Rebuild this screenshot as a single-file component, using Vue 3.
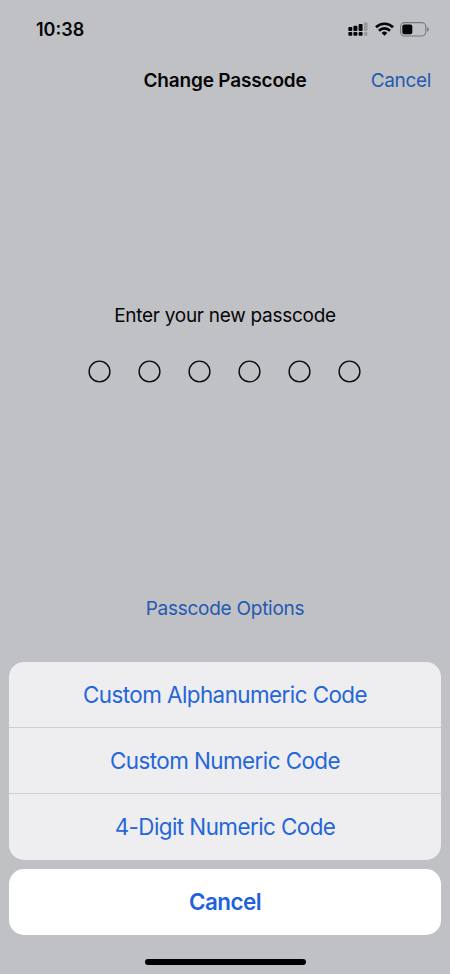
<script setup>
const options = [
  { label: 'Custom Alphanumeric Code', key: 'alpha' },
  { label: 'Custom Numeric Code', key: 'numeric' },
  { label: '4-Digit Numeric Code', key: 'digits' },
]
</script>

<template>
  <main class="screen">
    <div class="status">
      <span class="time">10:38</span>
      <div class="indicators">
        <svg width="20" height="14" viewBox="0 0 20 14">
          <g fill="#050506">
            <rect x="0.3" y="5" width="4" height="4" rx="1" />
            <rect x="5.4" y="3.8" width="4" height="5.2" rx="1" />
            <rect x="10.6" y="1.9" width="4" height="7.1" rx="1" />
            <rect x="0.3" y="10.1" width="4" height="3.7" rx="1" />
            <rect x="5.4" y="10.1" width="4" height="3.7" rx="1" />
            <rect x="10.6" y="10.1" width="4" height="3.7" rx="1" />
          </g>
          <g fill="#98999c">
            <rect x="16" y="0.3" width="3.5" height="8.7" rx="1" />
            <rect x="16" y="10.1" width="3.5" height="3.6" rx="1" />
          </g>
        </svg>
        <svg width="19" height="14" viewBox="0 0 19 14">
          <g fill="none" stroke="#050506" stroke-width="2.7">
            <path d="M1 5.2A12.2 12.2 0 0 1 18 5.2" />
            <path d="M4 8.7A7.9 7.9 0 0 1 15 8.7" />
          </g>
          <path d="M9.5 13.8 6.6 10.9A4.2 4.2 0 0 1 12.4 10.9Z" fill="#050506" />
        </svg>
        <svg width="29" height="15" viewBox="0 0 29 15">
          <rect x=".6" y=".6" width="25.2" height="13.4" rx="4" fill="none" stroke="#77787b" stroke-width="1.1" />
          <rect x="2.3" y="2.4" width="10" height="9.8" rx="2" fill="#050506" />
          <path d="M27 5v4.8q1.7-.8 1.7-2.4t-1.7-2.4Z" fill="#77787b" />
        </svg>
      </div>
    </div>

    <header class="nav">
      <h1 class="title">Change Passcode</h1>
      <button class="nav-cancel">Cancel</button>
    </header>

    <section class="entry">
      <p class="prompt">Enter your new passcode</p>
      <div class="dots">
        <svg v-for="n in 6" :key="n" class="dot" viewBox="0 0 23 23">
          <circle cx="11.5" cy="11.5" r="10.4" />
        </svg>
      </div>
      <button class="more">Passcode Options</button>
    </section>

    <section class="sheet">
      <div class="group">
        <button v-for="o in options" :key="o.key" class="option" :class="o.key">{{ o.label }}</button>
      </div>
      <button class="dismiss">Cancel</button>
    </section>
    <div class="home"></div>
  </main>
</template>

<style>
body { background: #c0c1c5; }
</style>

<style scoped>
.screen {
  box-sizing: border-box;
  width: 450px;
  height: 974px;
  overflow: hidden;
  display: flex;
  flex-direction: column;
  background: #c0c1c5;
  color: #050506;
  font-family: Inter, "Liberation Sans", sans-serif;
}
button {
  border: 0;
  padding: 0;
  margin: 0;
  background: none;
  font: inherit;
}
.status {
  height: 58px;
  flex: none;
  display: flex;
  align-items: center;
  justify-content: space-between;
  padding: 0 21px 0 36px;
}
.time { font-size: 18px; font-weight: 600; letter-spacing: 0; }
.indicators { display: flex; align-items: center; gap: 6.5px; }
svg { display: block; }
.nav {
  height: 44px;
  flex: none;
  display: grid;
  grid-template-columns: 1fr auto 1fr;
  align-items: center;
  padding: 0 19px;
}
.title {
  grid-column: 2;
  margin: 0;
  font-size: 19px;
  font-weight: 600;
  letter-spacing: -0.17px;
}
.nav-cancel {
  justify-self: end;
  color: #2459b2;
  font-size: 19px;
  letter-spacing: -0.33px;
}
.entry {
  height: 560px;
  flex: none;
  display: flex;
  flex-direction: column;
  align-items: center;
}
.prompt {
  margin: 202px 0 0;
  line-height: 24px;
  font-size: 19px;
  letter-spacing: -0.28px;
}
.dots {
  display: flex;
  gap: 26.9px;
  margin-top: 32px;
  padding-right: 1px;
}
.dot {
  width: 23px;
  height: 23px;
  fill: none;
  stroke: #0b0b0c;
  stroke-width: 1.4;
}
.more {
  margin-top: 214px;
  line-height: 24px;
  color: #2459b2;
  font-size: 19px;
  letter-spacing: -0.26px;
}
.sheet {
  flex: none;
  display: flex;
  flex-direction: column;
  gap: 9px;
  padding: 0 9px;
}
.group {
  display: flex;
  flex-direction: column;
  border-radius: 15px;
  overflow: hidden;
  background: #eeeef0;
}
.option {
  height: 66px;
  color: #2566d8;
  font-size: 22.4px;
  letter-spacing: -0.55px;
}
.option:not(:last-child) { border-bottom: 1px solid #cdced0; }
.option:last-child { padding-bottom: 1px; }
.dismiss {
  height: 66px;
  padding-bottom: 1px;
  border-radius: 15px;
  background: #fff;
  color: #2062dd;
  font-size: 22.4px;
  font-weight: 600;
  letter-spacing: -0.5px;
}
.home {
  width: 161px;
  height: 6px;
  flex: none;
  margin: 24px auto 0;
  border-radius: 3px;
  background: #000;
}
</style>
